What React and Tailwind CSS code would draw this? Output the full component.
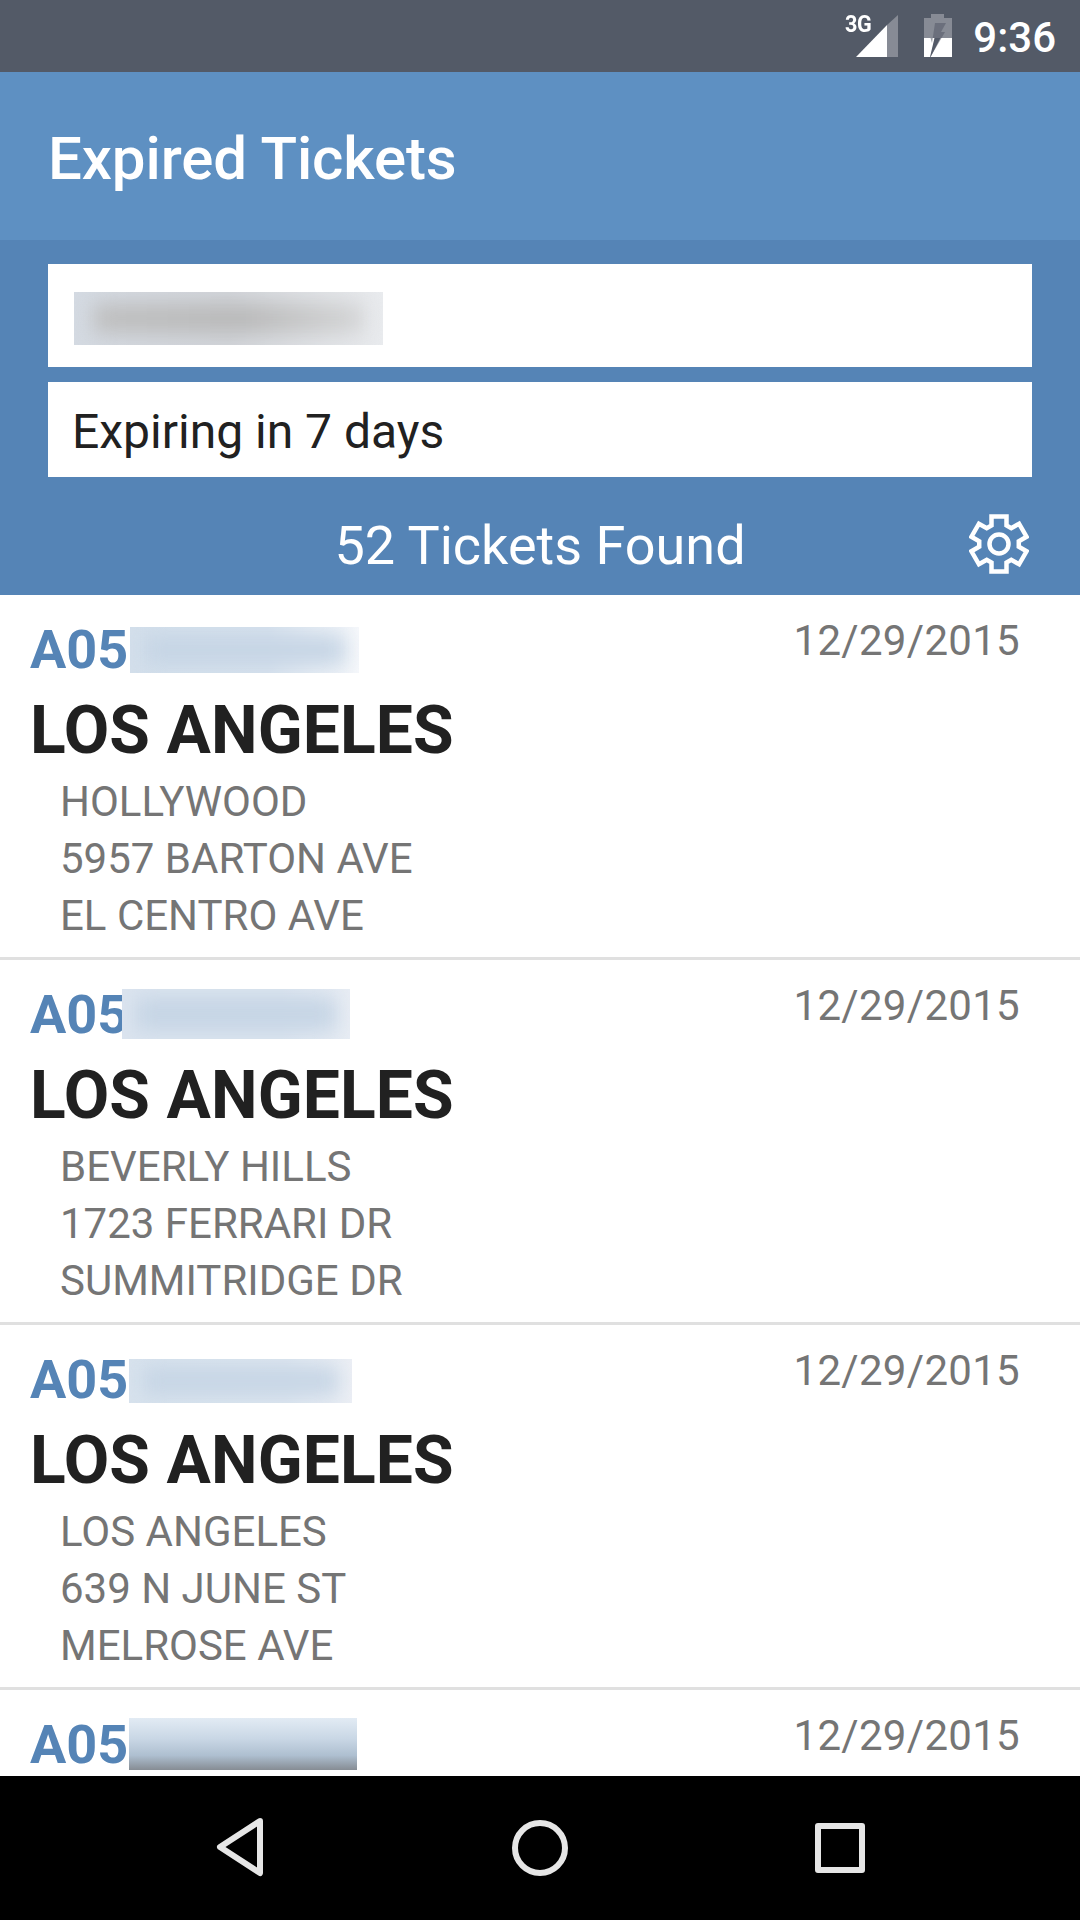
const rows = [
  {
    city: 'HOLLYWOOD',
    street: '5957 BARTON AVE',
    cross: 'EL CENTRO AVE',
    blur: 'ml-0 mt-[7px] h-[46px] w-[229px]',
    fade: 'bg-[linear-gradient(90deg,#d3dfeb_0%,#d6e1ed_60%,#f6f8fb_100%)]',
  },
  {
    city: 'BEVERLY HILLS',
    street: '1723 FERRARI DR',
    cross: 'SUMMITRIDGE DR',
    blur: 'ml-[-8px] mt-[4px] h-[50px] w-[228px]',
    fade: 'bg-[linear-gradient(90deg,#dbe4ef_0%,#dbe4ef_70%,#e8edf4_100%)]',
  },
  {
    city: 'LOS ANGELES',
    street: '639 N JUNE ST',
    cross: 'MELROSE AVE',
    blur: 'ml-[-1px] mt-[9px] h-[44px] w-[223px]',
    fade: 'bg-[linear-gradient(90deg,#d7e2ed_0%,#dce5ef_70%,#eceff5_100%)]',
  },
]

function gearPath() {
  // six square teeth, one pointing straight up
  const pts = []
  for (let k = 0; k < 6; k++) {
    const a = (k * Math.PI) / 3
    const local = [[-7.5, 18.5], [-7.5, 27.5], [7.5, 27.5], [7.5, 18.5]]
    local.forEach(([x, y]) => {
      pts.push([30 + x * Math.cos(a) + y * Math.sin(a), 30 + x * Math.sin(a) - y * Math.cos(a)])
    })
  }
  return 'M' + pts.map(p => p[0].toFixed(2) + ' ' + p[1].toFixed(2)).join('L') + 'Z'
}

function StatusBar() {
  return (
    <div className="h-[72px] bg-[#535a67] flex items-start justify-end relative shrink-0">
      <span className="absolute left-[845px] top-[12px] text-[24px] leading-[24px] font-bold text-white tracking-[-0.5px] scale-x-90 origin-left">3G</span>
      <svg width="44" height="44" viewBox="0 0 44 44" className="absolute left-[855px] top-[14px]">
        <path d="M32 11 L43 1 L43 43 L32 43Z" fill="#fff" fillOpacity="0.3" />
        <path d="M1 43 L32 11 L32 43Z" fill="#fff" />
      </svg>
      <svg width="30" height="44" viewBox="0 0 30 44" className="absolute left-[923px] top-[14px]">
        <path d="M8 0 H21 V4 H29 V24 H1 V4 H8Z" fill="#fff" fillOpacity="0.3" />
        <path d="M1 24 H11.5 L7 43 H1Z M15 24 H29 V43 H7.5 L17.5 24Z" fill="#fff" />
        <path d="M9 29 L12 9 H23 L18 18 H22 L7.5 43 L12 24 H7.5Z" fill="#535a67" fillOpacity="0.55" />
      </svg>
      <span className="mr-[24px] mt-[14px] text-[42px] leading-[48px] font-medium text-white">9:36</span>
    </div>
  )
}

function TicketRow({ row }) {
  return (
    <div className="h-[365px] shrink-0 border-b-[3px] border-[#e0e0e0] pl-[30px] pr-[60px] pt-[25px] relative">
      <div className="flex justify-between items-start">
        <div className="flex items-start">
          <span className="w-[100px] shrink-0 text-[54px] leading-[60px] font-bold text-[#5584b6]">A05</span>
          <div className={`${row.blur} ${row.fade} overflow-hidden`}>
            <div className="mx-[14px] my-[8px] h-[calc(100%-16px)] bg-[#c6d5e5] blur-[10px]"></div>
          </div>
        </div>
        <span className="mt-[-3px] text-[42px] leading-[48px] text-[#757575] tracking-[0.3px]">12/29/2015</span>
      </div>
      <div className="mt-[15px] text-[66px] leading-[72px] font-bold text-[#212121] tracking-[0.1px]">LOS ANGELES</div>
      <div className="mt-[6px] pl-[30px] text-[42px] leading-[57px] text-[#757575]">
        <div>{row.city}</div>
        <div>{row.street}</div>
        <div>{row.cross}</div>
      </div>
    </div>
  )
}

export default function App() {
  return (
    <div className="w-[1080px] h-[1920px] flex flex-col bg-white font-['Roboto',sans-serif] overflow-hidden">
      <StatusBar />

      <div className="h-[168px] shrink-0 bg-[#5e90c2] flex items-center pl-[48px] pt-[6px]">
        <h1 className="text-[60px] leading-[72px] font-medium text-white tracking-[-0.1px]">Expired Tickets</h1>
      </div>

      <div className="h-[355px] shrink-0 bg-[#5584b6] pt-[24px] px-[48px]">
        <div className="h-[103px] bg-white pl-[26px] pt-[28px]">
          <div className="w-[309px] h-[53px] overflow-hidden bg-[linear-gradient(90deg,#d4dae2_0%,#d2d5da_50%,#e9ebee_100%)]">
            <div className="mx-[20px] my-[12px] h-[29px] bg-[linear-gradient(90deg,#bfbfbf_0%,#b8b8b8_55%,#d4d5d6_100%)] blur-[10px]"></div>
          </div>
        </div>
        <div className="h-[95px] mt-[15px] bg-white pl-[24px] text-[48px] leading-[99px] text-[#212121]">Expiring in 7 days</div>
        <div className="h-[118px] pt-[20px] grid grid-cols-[1fr_auto_1fr] items-center">
          <div></div>
          <span className="text-[54px] leading-[64px] text-white">52 Tickets Found</span>
          <svg width="60" height="60" viewBox="0 0 60 60" fill="none" className="justify-self-end mr-[3px] mt-[-5px]">
            <path d={gearPath()} stroke="#fff" strokeWidth="4.5" strokeLinejoin="miter" />
            <circle cx="30" cy="30" r="9.5" stroke="#fff" strokeWidth="4.5" />
          </svg>
        </div>
      </div>

      <div className="flex-1 min-h-0 overflow-hidden flex flex-col">
        {rows.map((row, i) => <TicketRow key={i} row={row} />)}
        <div className="pl-[30px] pr-[60px] pt-[25px]">
          <div className="flex justify-between items-start">
            <div className="flex items-start">
              <span className="w-[100px] shrink-0 text-[54px] leading-[60px] font-bold text-[#5584b6]">A05</span>
              <div className="mt-[3px] h-[52px] w-[228px] -ml-[1px] bg-[linear-gradient(180deg,#e2ebf4_0%,#c9d7e5_40%,#aebfd0_72%,#868c94_100%)]"></div>
            </div>
            <span className="mt-[-3px] text-[42px] leading-[48px] text-[#757575] tracking-[0.3px]">12/29/2015</span>
          </div>
        </div>
      </div>

      <div className="h-[144px] shrink-0 bg-black flex items-center justify-center">
        <div className="w-[300px] flex justify-center">
          <svg width="56" height="64" viewBox="0 0 56 64" fill="none" className="mt-[-3px]">
            <path d="M48 6 L8 32 L48 58Z" stroke="#e6e6e6" strokeWidth="6" strokeLinejoin="round" />
          </svg>
        </div>
        <div className="w-[300px] flex justify-center">
          <div className="w-[56px] h-[56px] rounded-full border-[6px] border-[#e6e6e6]"></div>
        </div>
        <div className="w-[300px] flex justify-center">
          <div className="w-[50px] h-[50px] rounded-[3px] border-[6px] border-[#e6e6e6]"></div>
        </div>
      </div>
    </div>
  )
}
